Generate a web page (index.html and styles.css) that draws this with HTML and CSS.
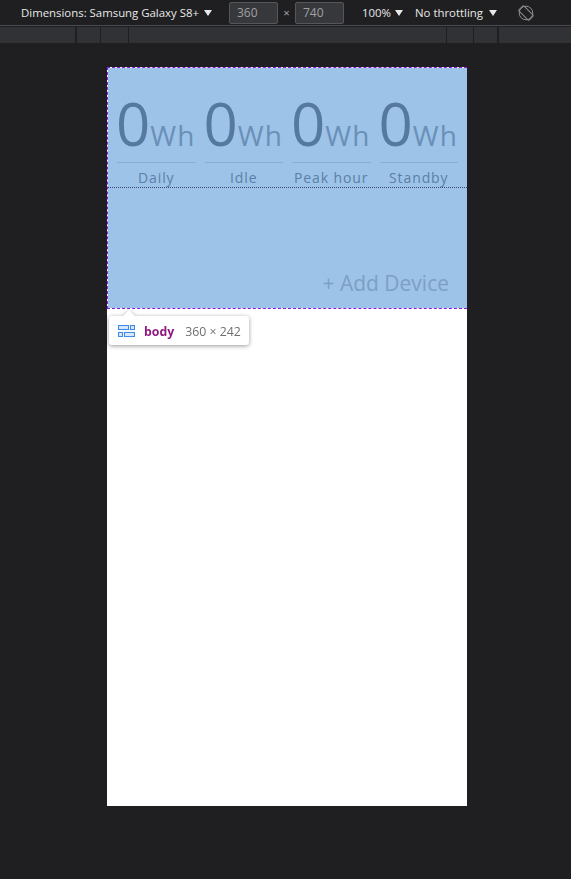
FILE: index.html
```html
<!DOCTYPE html>
<html lang="en">
<head>
  <meta charset="UTF-8" />
  <title>Device toolbar</title>
  <link rel="stylesheet" href="styles.css">
</head>
<body>

  <!-- Responsive toolbar -->
  <div class="toolbar">
    <span class="tool tool-device">Dimensions: Samsung Galaxy S8+</span>
    <span class="caret"></span>
    <span class="size-box box-w">360</span>
    <span class="times">×</span>
    <span class="size-box">740</span>
    <span class="tool tool-zoom">100%</span>
    <span class="caret"></span>
    <span class="tool tool-throttle">No throttling</span>
    <span class="caret"></span>
    <svg class="rotate" width="16" height="16" viewBox="0 0 16 16" fill="none" stroke="#8a8c90" stroke-width="1">
      <circle cx="8" cy="8" r="6.8"/>
      <rect x="4.5" y="0.8" width="7" height="14.4" rx="1" transform="rotate(-45 8 8)"/>
    </svg>
  </div>

  <!-- Media query ruler -->
  <div class="ruler">
    <span class="seg seg-a"></span>
    <span class="seg seg-b"></span>
    <span class="seg seg-c"></span>
    <span class="seg seg-d"></span>
    <span class="seg seg-e"></span>
    <span class="seg seg-b"></span>
    <span class="seg seg-f"></span>
  </div>

  <div class="viewport">
    <div class="app">
      <div class="stats">
        <div class="stat">
          <div class="value">0<span class="unit">Wh</span></div>
          <div class="label">Daily</div>
        </div>
        <div class="stat">
          <div class="value">0<span class="unit">Wh</span></div>
          <div class="label">Idle</div>
        </div>
        <div class="stat">
          <div class="value">0<span class="unit">Wh</span></div>
          <div class="label">Peak hour</div>
        </div>
        <div class="stat">
          <div class="value">0<span class="unit">Wh</span></div>
          <div class="label">Standby</div>
        </div>
      </div>
      <div class="add-device">+ Add Device</div>
      <div class="guide"></div>
    </div>

    <!-- Inspector tooltip -->
    <div class="tip">
      <svg class="tip-icon" width="17" height="12" viewBox="0 0 17 12" fill="#dcebfb" stroke="#3f8ce8" stroke-width="1.1">
        <rect x="0.5" y="0.5" width="10" height="4"/>
        <rect x="12.5" y="0.5" width="4" height="4"/>
        <rect x="0.5" y="7.5" width="4" height="4"/>
        <rect x="6.5" y="7.5" width="10" height="4"/>
      </svg>
      <span class="tip-name">body</span>
      <span class="tip-size">360 × 242</span>
    </div>
  </div>

</body>
</html>
```

FILE: styles.css
```css
html, body {
  height: 100%;
}
body {
  margin: 0; background: #1f1f21; overflow: hidden;
  font-family: "Open Sans", "Noto Sans", sans-serif;
}

.toolbar {
  display: flex; align-items: center; height: 25px;
  border-bottom: 1px solid #4a4b4e; color: #e8e8e8; font-size: 11.4px;
}
.tool { white-space: nowrap; }
.tool-device { margin-left: 21px; width: 178px; }
.caret {
  width: 0; height: 0; margin-left: 5px;
  border-left: 4px solid transparent; border-right: 4px solid transparent;
  border-top: 6px solid #e8e8e8;
}
.size-box {
  box-sizing: border-box; width: 49px; height: 22px; padding: 3px 7px;
  background: #37383b; border: 1px solid #55565a; border-radius: 2px;
  color: #a0a1a4; line-height: 14px; font-size: 12px;
}
.box-w { margin-left: 17px; }
.times { width: 17px; text-align: center; color: #a0a1a4; }
.tool-zoom { margin-left: 18px; width: 28px; }
.tool-throttle { margin-left: 12px; width: 69px; }
.rotate { margin-left: 21px; }

.ruler {
  display: flex; gap: 1.5px; height: 16px; margin-top: 1px;
}
.seg { flex: none; height: 100%; background: #303236; }
.seg-a { width: 75px; }
.seg-b { width: 23px; }
.seg-c { width: 26.5px; }
.seg-d { flex: 1; }
.seg-e { width: 25.5px; }
.seg-f { width: 72.5px; }

.viewport {
  position: relative; width: 360px; height: 739px;
  margin: 24px 0 0 107px; background: #fff;
}
.app {
  position: relative; box-sizing: border-box; height: 242px; padding: 19px 0 0 9px;
  background: #9dc3e8; background-clip: padding-box; color: #56799f;
  border-top: 1px dashed #8f17e6; border-bottom: 1px dashed #8f17e6;
  border-left: 1px dashed #8f17e6;
}
.stats {
  display: grid; grid-template-columns: repeat(4, 78.5px); column-gap: 9px;
}
.stat { text-align: center; }
.value {
  height: 75px; border-bottom: 1px solid #8aaed2; text-indent: -1px;
  font-size: 60px; line-height: 72px; text-align: left; white-space: nowrap;
}
.unit {
  font-size: 28px; line-height: 1; letter-spacing: 1px; color: #6a90b8;
}
.label {
  margin-top: 5px; font-size: 14px; line-height: 19px; letter-spacing: 0.9px;
  color: #5b80a7; white-space: nowrap;
}
.guide {
  position: absolute; left: 0; right: 0; top: 119px;
  border-top: 1px dotted #4a3d7c;
}
.add-device {
  margin-top: 81px; padding-right: 18px; text-align: right;
  font-size: 21px; line-height: 30px; color: #7d9fc5;
}

.tip {
  position: absolute; left: 2px; top: 249px; display: flex; align-items: center;
  box-sizing: border-box; width: 140px; height: 29px; padding: 1px 0 0 9px;
  background: #fff; border-radius: 3px; font-size: 12.3px;
  filter: drop-shadow(0 1px 2px rgba(0, 0, 0, 0.4));
}
.tip::before {
  content: ""; position: absolute; left: 14px; top: -6px; width: 0; height: 0;
  border-left: 6px solid transparent; border-right: 6px solid transparent;
  border-bottom: 6px solid #fff;
}
.tip-name { margin-left: 9px; font-weight: 700; color: #8f1a80; }
.tip-size { margin-left: 11px; color: #6f6f6f; }
```
